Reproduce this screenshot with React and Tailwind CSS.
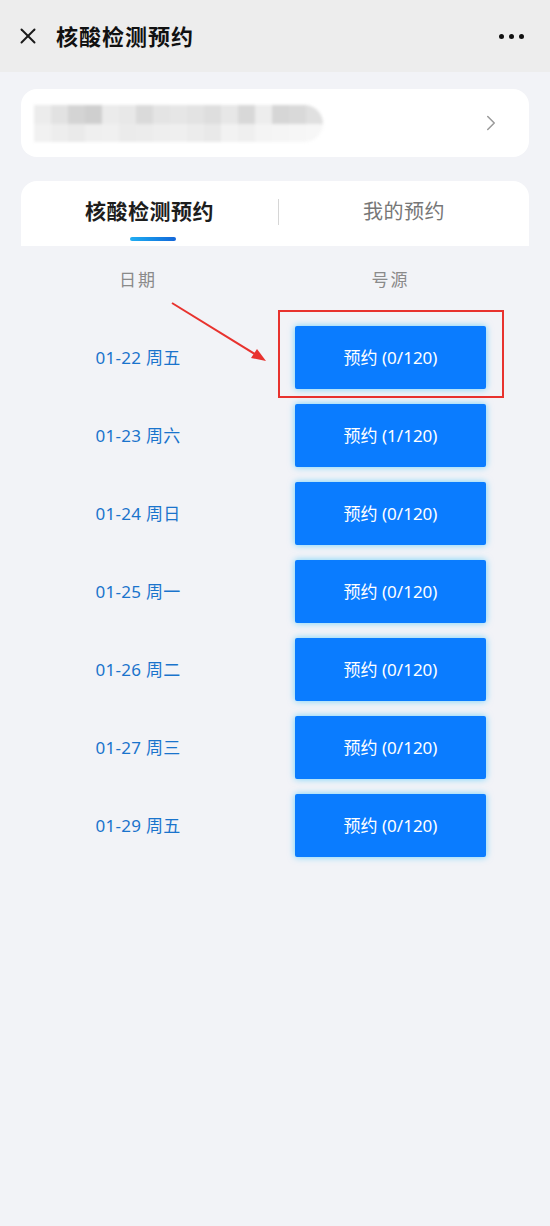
import { X, ChevronRight } from 'lucide-react'

const slots = [
  { date: '01-22 周五', used: 0 },
  { date: '01-23 周六', used: 1 },
  { date: '01-24 周日', used: 0 },
  { date: '01-25 周一', used: 0 },
  { date: '01-26 周二', used: 0 },
  { date: '01-27 周三', used: 0 },
  { date: '01-29 周五', used: 0 },
]

// mosaic shades for the blurred address line
const topShades = ['#ececec', '#e2e2e2', '#d4d4d4', '#cfcfcf', '#ebebeb', '#e8e8e8', '#dadada', '#e4e4e4', '#e6e6e6', '#e3e3e3', '#dedede', '#e7e7e7', '#d8d8d8', '#ededed', '#d6d6d6', '#d9d9d9', '#e0e0e0']
const bottomShades = ['#f1f1f1', '#ededed', '#eaeaea', '#efefef', '#f0f0f0', '#ebebeb', '#ececec', '#eeeeee', '#efefef', '#ececec', '#e9e9e9', '#f2f2f2', '#efefef', '#f4f4f4', '#f5f5f5', '#f6f6f6', '#f7f7f7']

const App = () => {
  return (
    <div
      className="relative w-[550px] min-h-[1226px] bg-[#f2f3f7]"
      style={{ fontFamily: '"Noto Sans", "Noto Sans CJK SC", sans-serif' }}
    >
      {/* Top bar */}
      <header className="h-[72px] bg-[#ededed] flex items-center pl-[15px] pr-[26px]">
        <X className="w-[26px] h-[26px] text-[#1a1a1a]" strokeWidth={1.8} />
        <h1 className="ml-[15px] text-[22px] font-bold text-[#111] tracking-[1px]">核酸检测预约</h1>
        <div className="ml-auto flex items-center gap-[5px]">
          <span className="w-[5px] h-[5px] rounded-full bg-[#111]" />
          <span className="w-[5px] h-[5px] rounded-full bg-[#111]" />
          <span className="w-[5px] h-[5px] rounded-full bg-[#111]" />
        </div>
      </header>

      <main className="px-[21px] pt-[17px]">
        {/* Address card */}
        <div className="h-[68px] bg-white rounded-[16px] flex items-center pl-[13px] pr-[25px]">
          <div className="flex flex-col blur-[1.5px] rounded-r-full overflow-hidden">
            <div className="flex">
              {topShades.map((c, i) => (
                <span key={i} className="w-[17px] h-[19px]" style={{ backgroundColor: c }} />
              ))}
            </div>
            <div className="flex">
              {bottomShades.map((c, i) => (
                <span key={i} className="w-[17px] h-[18px]" style={{ backgroundColor: c }} />
              ))}
            </div>
          </div>
          <ChevronRight className="ml-auto w-[26px] h-[26px] text-[#9a9a9a]" strokeWidth={1.4} />
        </div>

        {/* Tabs */}
        <div className="mt-[24px] h-[65px] bg-white rounded-t-[16px] flex items-stretch">
          <div className="relative w-[257px] flex items-center justify-center">
            <span className="text-[21px] font-bold text-[#1d1d1d] tracking-[0.5px] -mt-[3px]">核酸检测预约</span>
            <span className="absolute bottom-[5px] left-[109px] w-[46px] h-[4px] rounded-full bg-gradient-to-r from-[#22aef2] to-[#1566d8]" />
          </div>
          <div className="self-center w-px h-[26px] bg-[#d6d6d6] -mt-[4px]" />
          <div className="flex-1 flex items-center justify-center">
            <span className="text-[20px] text-[#777] tracking-[0.5px] -mt-[3px]">我的预约</span>
          </div>
        </div>

        {/* Table header */}
        <div className="h-[68px] flex items-center text-[17px] text-[#8a8a8a] tracking-[2px]">
          <div className="w-[234px] text-center">日期</div>
          <div className="w-[271px] text-center">号源</div>
        </div>

        {/* Slots */}
        <div className="pt-[12px] flex flex-col gap-[15px]">
          {slots.map((s) => (
            <div key={s.date} className="flex items-center">
              <div className="w-[234px] text-center text-[17px] text-[#1a74cc] tracking-[0.3px]">{s.date}</div>
              <div className="w-[271px] flex justify-center">
                <button className="w-[191px] h-[63px] bg-[#0a7cff] text-white text-[17px] rounded-[2px] shadow-[0_0_7px_rgba(0,180,255,0.55)]">
                  预约 ({s.used}/120)
                </button>
              </div>
            </div>
          ))}
        </div>
      </main>

      {/* Annotation: red box + arrow */}
      <div className="absolute left-[278px] top-[310px] w-[226px] h-[88px] border-2 border-[#e8322e]" />
      <svg className="absolute left-0 top-0 pointer-events-none" width="550" height="400" viewBox="0 0 550 400">
        <line x1="172" y1="303" x2="258" y2="356" stroke="#e8322e" strokeWidth="2" />
        <polygon points="266,361 251,358 257,349" fill="#e8322e" />
      </svg>
    </div>
  )
}

export default App
